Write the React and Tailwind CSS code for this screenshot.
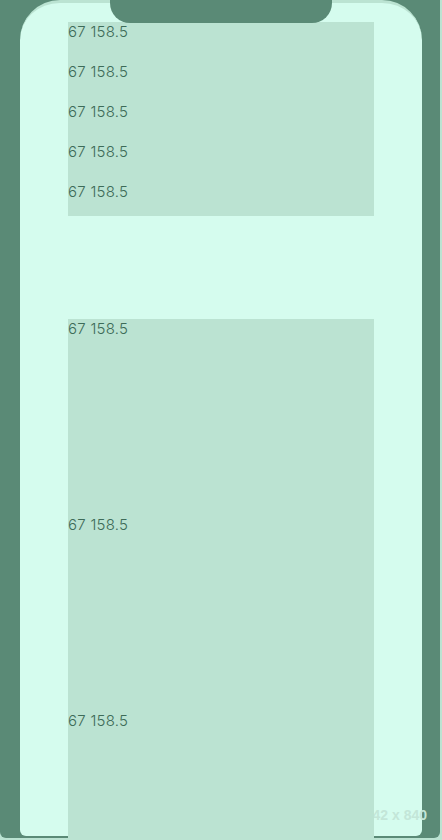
import React from 'react';

const rowsTop = [0, 1, 2, 3, 4];
const rowsBottom = [0, 1, 2];

const Label = () => (
    <span className="block text-[15px] font-light tracking-[0.25px] leading-[18px] text-[#3d6b58]" style={{ fontFamily: 'Inter, "Liberation Sans", sans-serif' }}>
        67 158.5
    </span>
);

const App = () => {
    return (
        <div className="relative w-[442px] h-[840px] overflow-hidden bg-[#bbe3d2]">
            {/* phone frame */}
            <div className="w-[440px] h-[838px] bg-[#5a8a76] rounded-b-[6px] pl-[20px]">
                <div className="relative w-[402px] h-[836px] bg-[#d5fcee] border-t-[3px] border-[#bbe3d2] rounded-t-[40px] rounded-b-[6px] pt-[19px] pl-[48px]">
                    {/* size label under the content */}
                    <span className="absolute right-[-5px] bottom-[10px] text-[14px] font-bold text-[#c3e6d8]" style={{ fontFamily: '"Liberation Sans", sans-serif' }}>
                        442 x 840
                    </span>

                    <div className="relative z-10 w-[306px] h-[194px] bg-[#bbe3d2]">
                        {rowsTop.map((i) => (
                            <div key={i} className="h-[40px] pt-[1px]">
                                <Label />
                            </div>
                        ))}
                    </div>

                    <div className="relative z-10 mt-[103px] w-[306px] h-[600px] bg-[#bbe3d2]">
                        {rowsBottom.map((i) => (
                            <div key={i} className="h-[196px] pt-[1px]">
                                <Label />
                            </div>
                        ))}
                    </div>
                </div>
            </div>

            {/* notch */}
            <div className="absolute top-0 left-[110px] w-[222px] h-[23px] bg-[#5a8a76] rounded-b-[20px] z-20"></div>
        </div>
    );
};

export default App;
